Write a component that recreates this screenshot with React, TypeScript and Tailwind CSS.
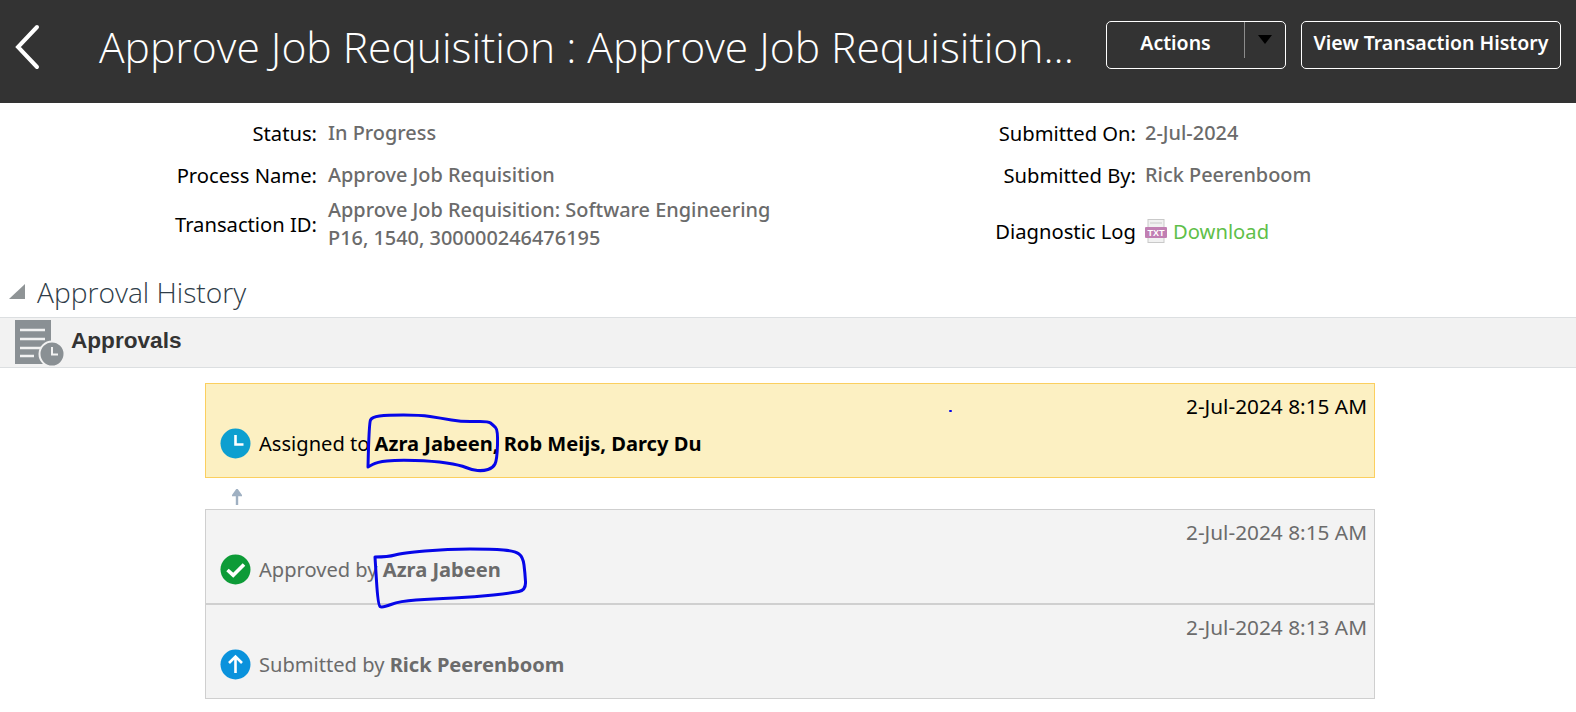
import React from 'react';

const BODY_FONT = 'font-["Noto_Sans",sans-serif]';

const CARDS = [
  {
    time: '2-Jul-2024 8:15 AM',
    kind: 'assigned',
    lead: 'Assigned to',
    names: 'Azra Jabeen, Rob Meijs, Darcy Du',
  },
  {
    time: '2-Jul-2024 8:15 AM',
    kind: 'approved',
    lead: 'Approved by',
    names: 'Azra Jabeen',
  },
  {
    time: '2-Jul-2024 8:13 AM',
    kind: 'submitted',
    lead: 'Submitted by',
    names: 'Rick Peerenboom',
  },
];

const PEN_MARK_ONE = [
  [368, 467], [369, 423], [372, 417], [387, 415], [420, 415], [440, 418], [463, 422], [488, 421],
  [493, 425], [498, 430], [497, 460], [493, 468], [483, 471], [472, 470], [460, 465], [433, 461],
  [397, 460], [377, 462], [368, 467],
];

const PEN_MARK_TWO = [
  [375, 557], [388, 557], [402, 553], [448, 549], [492, 549], [515, 551], [523, 557], [525, 573],
  [526, 590], [512, 593], [475, 597], [432, 599], [400, 601], [382, 608], [378, 605], [375, 557],
];

// rounds the corners of a hand-drawn line through its midpoints
function smoothPath(points: number[][]) {
  let d = `M${points[0][0]} ${points[0][1]}`;
  for (let i = 1; i < points.length - 1; i++) {
    const [x, y] = points[i];
    const [nx, ny] = points[i + 1];
    d += `Q${x} ${y} ${(x + nx) / 2} ${(y + ny) / 2}`;
  }
  const last = points[points.length - 1];
  return `${d}L${last[0]} ${last[1]}`;
}

function StatusIcon({ kind }: { kind: string }) {
  if (kind === 'assigned') {
    return (
      <svg width="31" height="31" viewBox="0 0 31 31" className="shrink-0">
        <circle cx="15.5" cy="15.5" r="15" fill="#0d9fd0" />
        <path d="M15.5 7v9.500h8" fill="none" stroke="#fff" strokeWidth="2.6" />
      </svg>
    );
  }
  if (kind === 'approved') {
    return (
      <svg width="31" height="31" viewBox="0 0 31 31" className="shrink-0">
        <circle cx="15.5" cy="15.5" r="15" fill="#0d9b37" />
        <path d="M7.500 16l5.700 5.200L24 10.500" fill="none" stroke="#fff" strokeWidth="3.6" />
      </svg>
    );
  }
  return (
    <svg width="31" height="31" viewBox="0 0 31 31" className="shrink-0">
      <circle cx="15.5" cy="15.5" r="15" fill="#0a92dc" />
      <path d="M15.5 24V8M9 14l6.500-6.500L22 14" fill="none" stroke="#fff" strokeWidth="2.6" />
    </svg>
  );
}

function DetailRow({
  label,
  children,
  className,
  labelWidth,
}: {
  label: string;
  children: React.ReactNode;
  className: string;
  labelWidth: string;
}) {
  return (
    <div className={`flex items-center ${className}`}>
      <div className={`${labelWidth} shrink-0 text-right text-[20.2px] text-black`}>{label}</div>
      <div className="text-[19.9px] font-medium text-[#6b6b6b]">{children}</div>
    </div>
  );
}

export default function App() {
  return (
    <div className={`relative h-[712px] w-[1576px] overflow-hidden bg-white ${BODY_FONT}`}>
      <header className="flex h-[103px] items-start bg-[#333333] text-white">
        <svg width="28" height="46" viewBox="0 0 28 46" className="ml-[13px] mt-[24px] shrink-0">
          <path d="M24 3L5 23l19 20" fill="none" stroke="#fff" strokeWidth="4" strokeLinecap="round" />
        </svg>
        <h1 className='ml-[58px] mt-[12px] w-[986px] whitespace-nowrap font-["Open_Sans",sans-serif] text-[42.6px] leading-[68px] font-light'>
          Approve Job Requisition : Approve Job Requisition...
        </h1>
        <div className="ml-[21px] mt-[21px] flex h-[48px] w-[180px] rounded-[5px] border border-white">
          <button className="flex-1 pb-1 text-[19.5px] font-semibold">Actions</button>
          <div className="flex h-[36px] w-[41px] justify-center border-l border-[#8c8c8c] pt-[13px]">
            <span className="h-0 w-0 border-x-[7px] border-t-[9px] border-x-transparent border-t-black" />
          </div>
        </div>
        <button className="ml-[15px] mt-[21px] h-[48px] w-[260px] whitespace-nowrap rounded-[5px] border border-white pb-1 text-[19.5px] font-semibold">
          View Transaction History
        </button>
      </header>

      <section className="flex h-[173px] leading-[28px]">
        <div className="w-[815px] shrink-0">
          <DetailRow label="Status:" labelWidth="w-[328px] pr-[11px]" className="mt-[16px] h-[28px]">
            In Progress
          </DetailRow>
          <DetailRow label="Process Name:" labelWidth="w-[328px] pr-[11px]" className="mt-[14px] h-[28px]">
            Approve Job Requisition
          </DetailRow>
          <DetailRow label="Transaction ID:" labelWidth="w-[328px] pr-[11px]" className="mt-[7px] h-[56px]">
            Approve Job Requisition: Software Engineering
            <br />
            P16, 1540, 300000246476195
          </DetailRow>
        </div>
        <div className="flex-1">
          <DetailRow label="Submitted On:" labelWidth="w-[330px] pr-[9px]" className="mt-[16px] h-[28px]">
            2-Jul-2024
          </DetailRow>
          <DetailRow label="Submitted By:" labelWidth="w-[330px] pr-[9px]" className="mt-[14px] h-[28px]">
            Rick Peerenboom
          </DetailRow>
          <div className="mt-[28px] flex h-[28px] items-center">
            <div className="w-[330px] shrink-0 pr-[9px] text-right text-[20.2px] text-black">Diagnostic Log</div>
            <svg width="22" height="24" viewBox="0 0 22 24" className="shrink-0">
              <rect x="3" y="0.5" width="16" height="23" fill="#f1f1f1" stroke="#c9c9c9" />
              <path d="M5 4h12" stroke="#c9c9c9" />
              <rect x="0" y="8" width="22" height="11" rx="1" fill="#c17fb3" />
              <text x="11" y="17" textAnchor="middle" fontSize="9" fontWeight="700" fill="#fff" fontFamily="Liberation Sans, sans-serif">
                TXT
              </text>
            </svg>
            <span className="ml-[6px] text-[20.2px] text-[#5fbf4a]">Download</span>
          </div>
        </div>
      </section>

      <div className="flex h-[41px] items-center pl-[9px]">
        <span className="h-0 w-0 -translate-y-[5px] border-b-[15px] border-l-[16px] border-b-[#8f9496] border-l-transparent" />
        <h2 className='ml-[12px] pb-[9px] font-["Open_Sans",sans-serif] text-[28.2px] leading-[36px] font-light text-[#2f3d49]'>
          Approval History
        </h2>
      </div>

      <div className="flex h-[51px] items-center border-y border-[#dcdfe1] bg-[#f2f2f2] pl-[15px]">
        <svg width="50" height="46" viewBox="0 0 50 46" className="shrink-0">
          <rect x="0" y="0" width="36" height="44" fill="#8a9094" />
          <path d="M5 10h25M5 19h25M5 28h25M5 36h14" stroke="#f2f2f2" strokeWidth="2.6" />
          <circle cx="37" cy="34" r="12.5" fill="#8a9094" stroke="#f2f2f2" strokeWidth="2" />
          <path d="M37 27v7.500h6" fill="none" stroke="#f2f2f2" strokeWidth="2" />
        </svg>
        <span className='ml-[6px] pb-1 font-["Liberation_Sans",sans-serif] text-[22.6px] font-bold text-[#333]'>
          Approvals
        </span>
      </div>

      <main className="ml-[205px] mt-[15px] w-[1170px]">
        <ApprovalCard card={CARDS[0]} className="h-[95px] border border-[#fbcf5f] bg-[#fcf0c2] text-black" />
        <div className="flex h-[31px] items-center pl-[27px] pt-[6px]">
          <svg width="10" height="16" viewBox="0 0 10 16">
            <path d="M5 16V3M1.500 6L5 1l3.500 5z" stroke="#9fb0c2" strokeWidth="2.4" fill="#9fb0c2" />
          </svg>
        </div>
        <div className="border border-[#cfcfcf] bg-[#f3f3f3] text-[#6b6b6b]">
          <ApprovalCard card={CARDS[1]} className="h-[95px] border-b-2 border-[#cfcfcf]" />
          <ApprovalCard card={CARDS[2]} className="h-[93px]" />
        </div>
      </main>

      {/* pen marks drawn over the screenshot */}
      <svg width="1576" height="712" className="pointer-events-none absolute top-0 left-0" fill="none" stroke="#0606e8" strokeWidth="3" strokeLinecap="round">
        <path d={smoothPath(PEN_MARK_ONE)} />
        <path d={smoothPath(PEN_MARK_TWO)} />
        <path d="M950 411h1" strokeWidth="2" />
      </svg>
    </div>
  );
}

function ApprovalCard({
  card,
  className,
}: {
  card: (typeof CARDS)[number];
  className: string;
}) {
  return (
    <div className={`flex flex-col pl-[14px] pr-[7px] ${className}`}>
      <div className="mt-[8px] h-[28px] text-right text-[20.8px] leading-[28px]">{card.time}</div>
      <div className="mt-[6px] flex items-center gap-[8px] text-[20.1px] leading-[34px]">
        <StatusIcon kind={card.kind} />
        <span className="pt-[1px]">
          {card.lead} <b className="font-bold">{card.names}</b>
        </span>
      </div>
    </div>
  );
}
